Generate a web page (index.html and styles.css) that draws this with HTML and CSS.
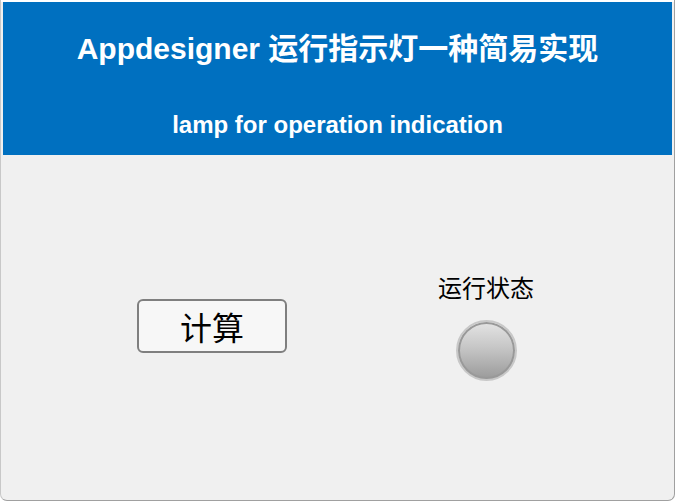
FILE: index.html
```html
<!DOCTYPE html>
<html>
<head>
<meta charset="utf-8">
<link rel="stylesheet" href="styles.css">
</head>
<body>
<div class="frame">
  <header class="banner">
    <h1 class="title">Appdesigner 运行指示灯一种简易实现</h1>
    <h2 class="subtitle">lamp for operation indication</h2>
  </header>
  <main class="body">
    <button class="calc">计算</button>
    <div class="status">
      <div class="status-label">运行状态</div>
      <div class="lamp"></div>
    </div>
  </main>
</div>
</body>
</html>
```
FILE: styles.css
```css
html, body {
  margin: 0;
  padding: 0;
  background: #ffffff;
}
.frame {
  width: 675px;
  height: 501px;
  box-sizing: border-box;
  padding: 2px 2px 0 2px;
  background: #f0f0f0;
  border-right: 1px solid #a0a0a0;
  border-bottom: 1px solid #a0a0a0;
  border-left: 1px solid #c8c8c8;
  border-radius: 0 0 7px 7px;
  display: flex;
  flex-direction: column;
  box-shadow: inset 0 2px 0 #ffffff;
}
.banner {
  background: #0070c0;
  height: 153px;
  display: flex;
  flex-direction: column;
  align-items: center;
  color: #ffffff;
  font-family: "Liberation Sans", "Noto Sans CJK SC", sans-serif;
}
.title {
  margin: 29px 0 0 0;
  font-size: 30px;
  line-height: 36px;
  font-weight: bold;
  letter-spacing: 0;
}
.subtitle {
  margin: 43px 0 0 0;
  font-size: 24px;
  line-height: 30px;
  font-weight: bold;
}
.body {
  flex: 1;
  display: flex;
  align-items: flex-start;
  padding-left: 134px;
  gap: 149px;
}
.calc {
  margin-top: 144px;
  width: 150px;
  height: 54px;
  box-sizing: border-box;
  border: 2px solid #7f7f7f;
  border-radius: 6px;
  background: #f7f7f7;
  font-family: "Noto Sans CJK SC", sans-serif;
  font-size: 32px;
  line-height: 1;
  color: #000000;
  padding: 0;
}
.status {
  margin-top: 117px;
  width: 100px;
  display: flex;
  flex-direction: column;
  align-items: center;
}
.status-label {
  font-family: "Noto Sans CJK SC", sans-serif;
  font-size: 24px;
  line-height: 30px;
  color: #000000;
}
.lamp {
  margin-top: 18px;
  width: 61px;
  height: 61px;
  box-sizing: border-box;
  border-radius: 50%;
  border: 2px solid #c8c8c8;
  background: linear-gradient(180deg, #e4e4e4 0%, #c6c6c6 45%, #9a9a9a 100%);
  box-shadow: inset 0 0 0 2px #999999;
}
```
